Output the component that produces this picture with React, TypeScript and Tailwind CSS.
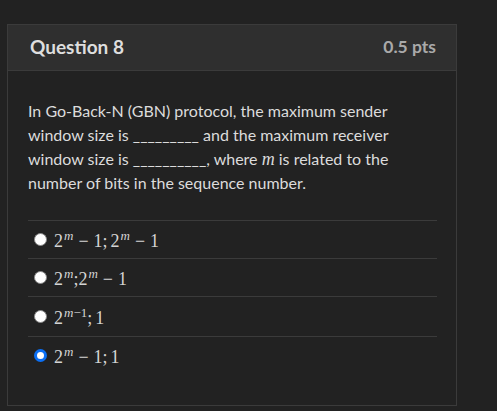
import { ReactNode } from 'react'

const Sup = ({ children }: { children: ReactNode }) => (
  <sup className="relative -top-[3px] text-[13px] italic align-top leading-none ml-[1px]">{children}</sup>
)

const Minus = () => <span className="mx-[5px]">−</span>

const options: { id: string; math: ReactNode; checked?: boolean; tall?: boolean }[] = [
  {
    id: 'a',
    math: (
      <>
        2<Sup>m</Sup>
        <Minus />
        1;<span className="ml-[3px]">2</span>
        <Sup>m</Sup>
        <Minus />1
      </>
    ),
  },
  {
    id: 'b',
    math: (
      <>
        2<Sup>m</Sup>;2<Sup>m</Sup>
        <Minus />1
      </>
    ),
  },
  {
    id: 'c',
    math: (
      <>
        2
        <Sup>
          m<span className="not-italic">−1</span>
        </Sup>
        ;<span className="ml-[3px]">1</span>
      </>
    ),
    tall: true,
  },
  {
    id: 'd',
    math: (
      <>
        2<Sup>m</Sup>
        <Minus />
        1;<span className="ml-[3px]">1</span>
      </>
    ),
    checked: true,
  },
]

export default function App() {
  return (
    <div className="min-h-[411px] w-[497px] bg-[#222222] pt-6 pl-[7px] font-['Lato',sans-serif]">
      <div className="w-[450px] border border-[#3b3b3b] bg-[#222222]">
        <div className="flex items-center justify-between h-[46px] bg-[#2f2f2f] border-b border-[#3b3b3b] pl-[22px] pr-5">
          <span className="text-[19px] font-bold text-[#dedede]">Question 8</span>
          <span className="text-[17.5px] font-bold text-[#a9a9a9]">0.5 pts</span>
        </div>
        <div className="pl-5 pr-[19px] pt-7 pb-[31px]">
          <p className="text-[16px] leading-6 text-[#dcdcdc]">
            In Go-Back-N (GBN) protocol, the maximum sender window size is _________ and the maximum
            receiver window size is __________, where{' '}
            <span className="font-['Liberation_Serif',serif] italic text-[18px]">m</span> is related to the
            number of bits in the sequence number.
          </p>
          <div className="mt-[25px]">
            {options.map((o) => (
              <label
                key={o.id}
                className={`flex items-center gap-[7px] border-t border-[#3b3b3b] pl-[6px] ${
                  o.tall ? 'h-10' : 'h-[38px]'
                }`}
              >
                {o.checked ? (
                  <span className="w-[13px] h-[13px] rounded-full bg-white border-[3.5px] border-[#0b6ff4]" />
                ) : (
                  <span className="w-[13px] h-[13px] rounded-full bg-white border border-[#8a8a8a]" />
                )}
                <span className="font-['Liberation_Serif',serif] text-[18px] text-[#d4d4d4] leading-none pt-[3px]">
                  {o.math}
                </span>
              </label>
            ))}
          </div>
        </div>
      </div>
    </div>
  )
}
